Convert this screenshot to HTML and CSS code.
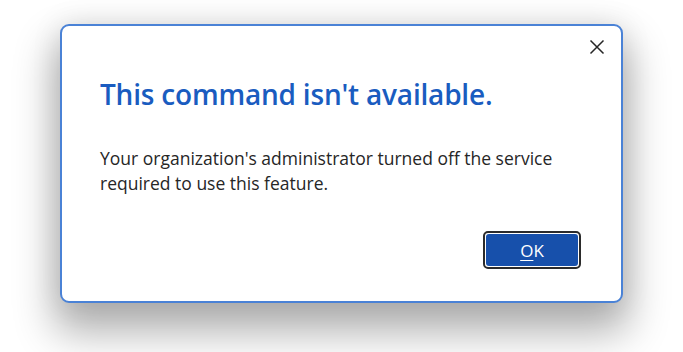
FILE: index.html
```html
<!DOCTYPE html>
<html lang="en">
<head>
<meta charset="utf-8">
<title>This command isn't available.</title>
<link rel="stylesheet" href="styles.css">
</head>
<body>
<div class="stage">
  <div class="dialog" role="dialog">
    <div class="dialog-head">
      <button class="close" aria-label="Close">
        <svg width="16" height="16" viewBox="0 0 16 16"><path d="M1.5 1.5 L14.5 14.5 M14.5 1.5 L1.5 14.5" stroke="#262626" stroke-width="1.5" fill="none"/></svg>
      </button>
    </div>
    <h1 class="title">This command isn't available.</h1>
    <p class="message">Your organization's administrator turned off the service required to use this feature.</p>
    <div class="dialog-foot">
      <button class="ok"><span class="ok-inner"><u>O</u>K</span></button>
    </div>
  </div>
</div>
</body>
</html>
```

FILE: styles.css
```css
html, body {
  margin: 0;
  padding: 0;
  background: #ffffff;
  width: 683px;
  height: 352px;
  overflow: hidden;
}

.stage {
  padding: 24px 0 0 60px;
}

.dialog {
  box-sizing: border-box;
  width: 563px;
  height: 279px;
  background: #ffffff;
  border: 2px solid #4a82d6;
  border-radius: 9px;
  box-shadow: 0 24px 40px 6px rgba(0, 0, 0, 0.3), 0 0 30px rgba(0, 0, 0, 0.1);
  padding: 12px 15px 0 38px;
  font-family: "Open Sans", "Noto Sans", sans-serif;
  display: flex;
  flex-direction: column;
}

.dialog-head {
  display: flex;
  justify-content: flex-end;
  height: 20px;
}

.close {
  border: 0;
  background: none;
  padding: 0;
  width: 18px;
  height: 18px;
  display: flex;
  align-items: center;
  justify-content: center;
}

.title {
  margin: 19px 0 0 0;
  font-size: 28px;
  font-weight: 600;
  color: #1a5cc0;
  line-height: 34px;
  letter-spacing: -0.2px;
}

.message {
  margin: 35px 0 0 0;
  font-size: 17.5px;
  line-height: 25px;
  color: #262626;
  width: 480px;
}

.dialog-foot {
  display: flex;
  justify-content: flex-end;
  margin-top: 35px;
  padding-right: 25px;
}

.ok {
  box-sizing: border-box;
  width: 98px;
  height: 38px;
  padding: 0;
  border: 2px solid #2b2b2b;
  border-radius: 5px;
  background: #ffffff;
  display: flex;
  align-items: stretch;
}

.ok-inner {
  flex: 1;
  margin: 1px;
  border-radius: 3px;
  background: #1750ab;
  color: #ffffff;
  font-family: "Open Sans", "Noto Sans", sans-serif;
  font-size: 17px;
  display: flex;
  align-items: center;
  justify-content: center;
}

.ok-inner u {
  text-underline-offset: 3px;
}
```
